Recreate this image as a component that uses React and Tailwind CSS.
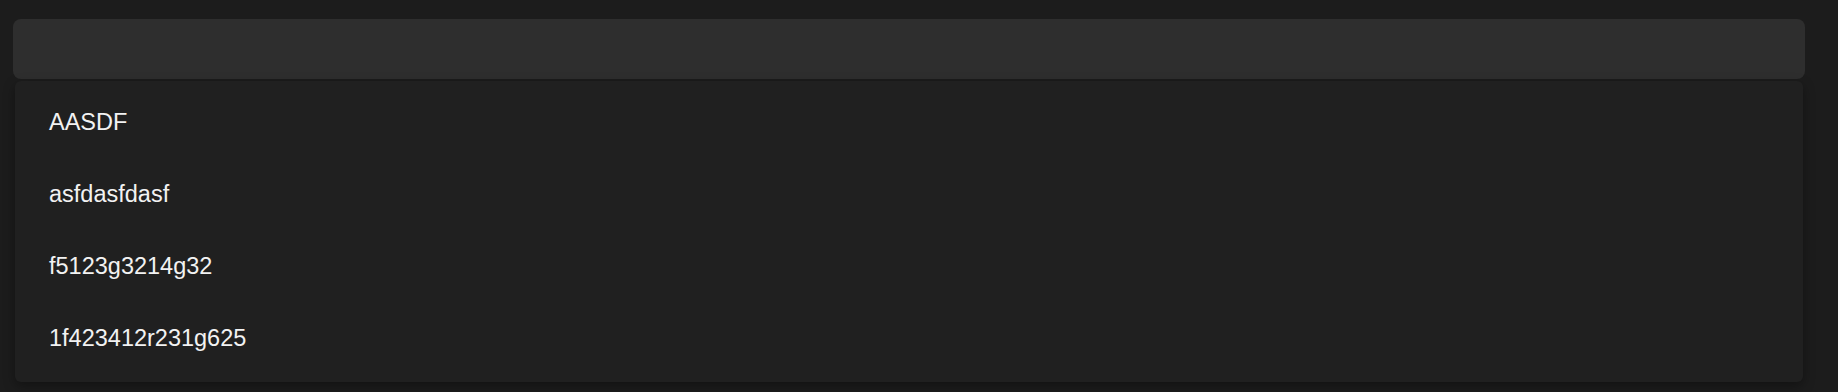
export default function App() {
  const items = ["AASDF", "asfdasfdasf", "f5123g3214g32", "1f423412r231g625"];
  return (
    <div className="w-[1838px] h-[392px] bg-[#1c1c1c] overflow-hidden" style={{ fontFamily: '"Liberation Sans", Arial, sans-serif' }}>
      <div className="ml-[13px] pt-[19px] w-[1792px] flex flex-col">
        <div className="h-[60px] rounded-[8px] bg-[#2e2e2e]" />
        <div className="mt-[2px] mx-[2px] rounded-[6px] bg-[#202020] pt-[6px] pb-[7px] shadow-[0_4px_12px_rgba(0,0,0,0.35)]">
          {items.map((t) => (
            <div key={t} className="h-[72px] flex items-center pl-[34px] text-[23.5px] text-[#f2f2f2]">
              {t}
            </div>
          ))}
        </div>
      </div>
    </div>
  );
}
